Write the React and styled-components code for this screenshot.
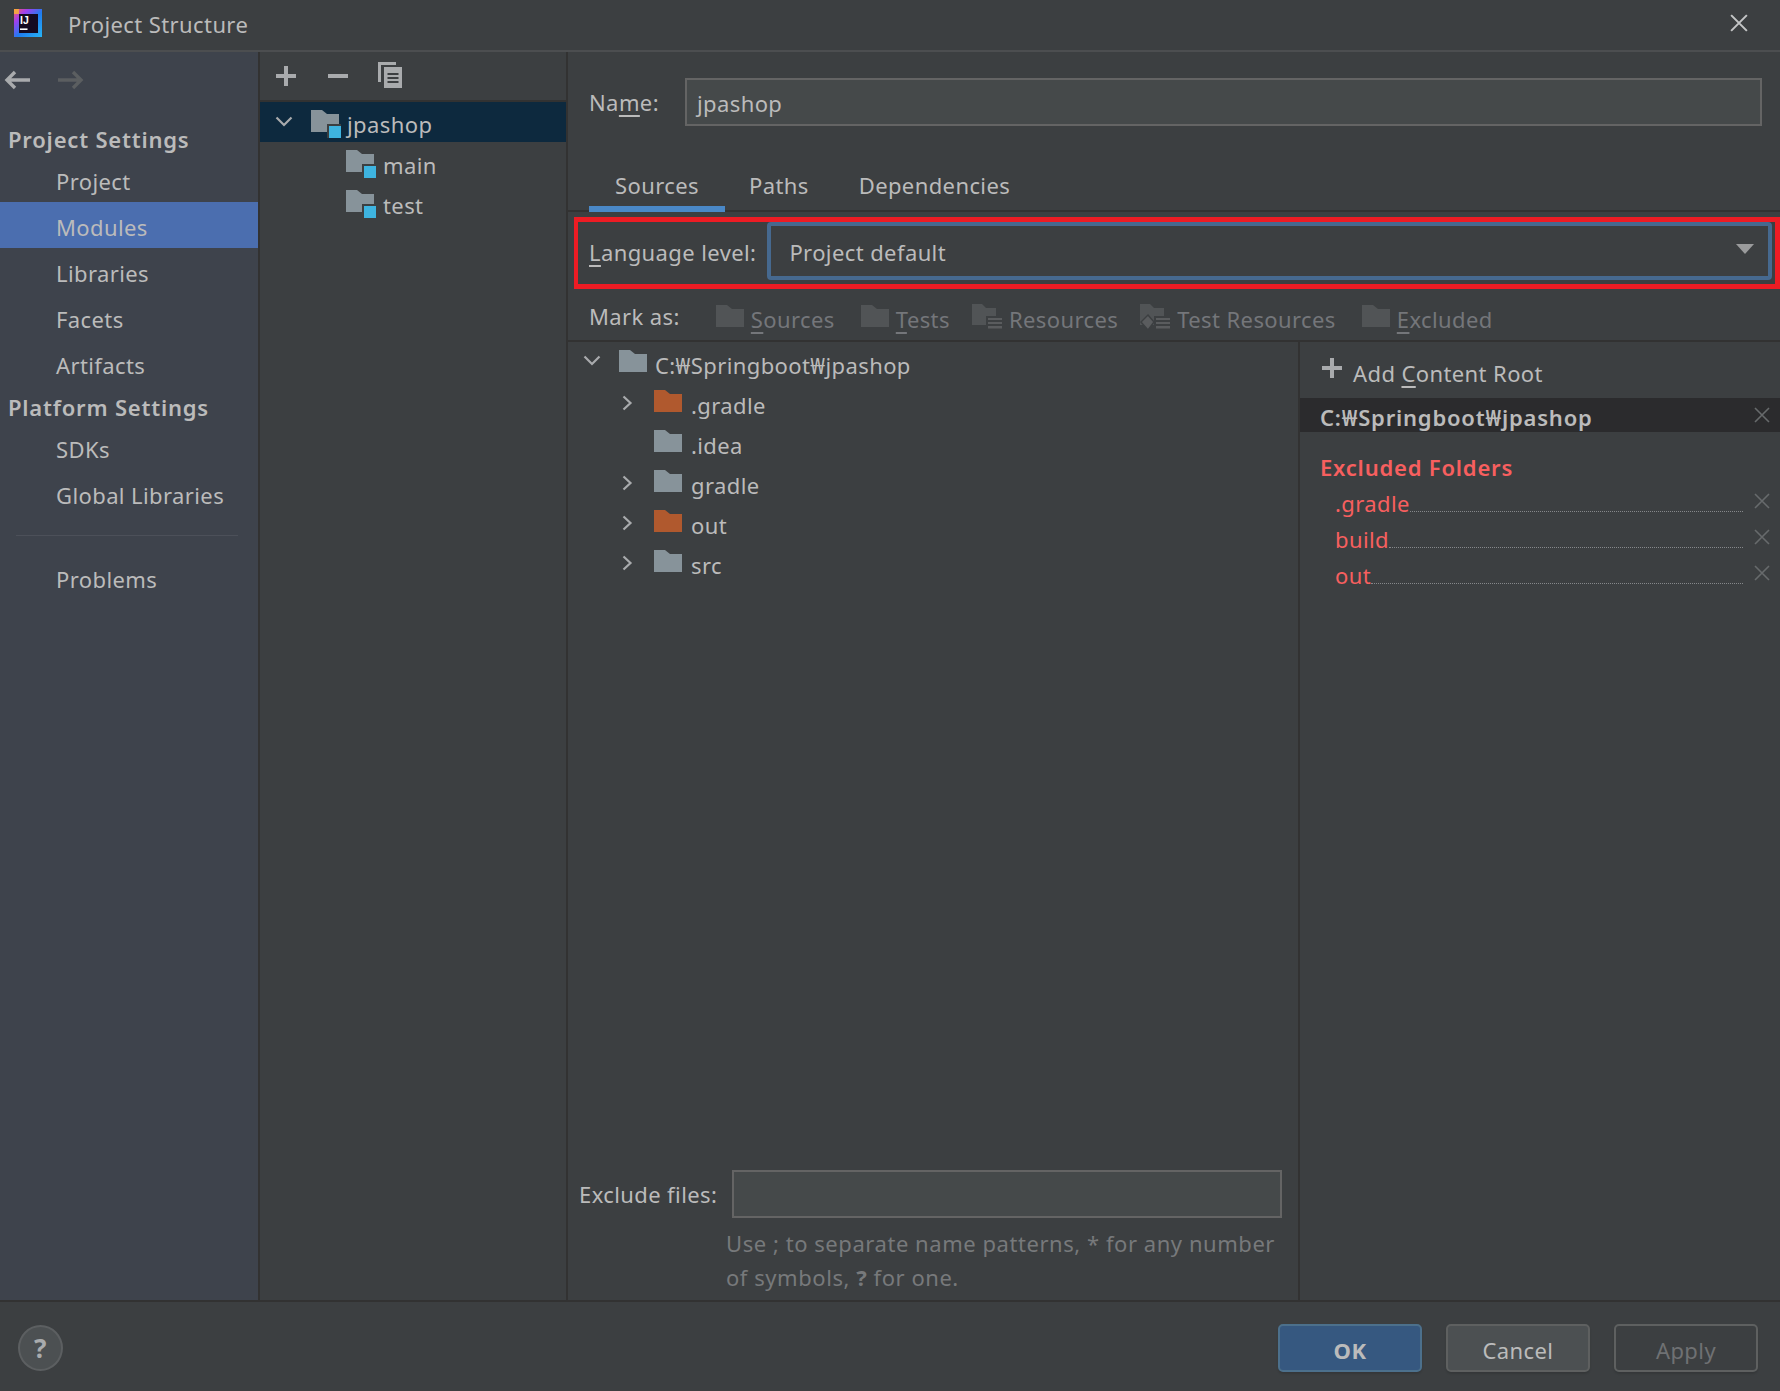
import React from 'react';
import styled, { createGlobalStyle } from 'styled-components';

const Global = createGlobalStyle`
  html, body { margin: 0; background: #3c3f41; }
  * { box-sizing: border-box; }
  svg { display: block; }
`;
const FONT = `"Noto Sans", "Noto Sans CJK KR", sans-serif`;

const Window = styled.div`
  width: 1780px; height: 1391px; display: flex; flex-direction: column; overflow: hidden;
  background: #3c3f41; color: #bbbbbb; font: 400 22px/30px ${FONT}; letter-spacing: .4px;
`;
const TitleBar = styled.header`
  height: 52px; flex: none; display: flex; align-items: center; padding: 0 32px 4px 14px;
  border-bottom: 2px solid #4c4e50;
`;
const Title = styled.h1`
  margin: 2px 0 0 26px; font: inherit; flex: 1;
`;
const Main = styled.div`flex: 1; display: flex; min-height: 0;`;

const Sidebar = styled.nav`
  width: 260px; flex: none; background: #3e434c; border-right: 2px solid #323232;
  display: flex; flex-direction: column;
`;
const NavArrows = styled.div`
  height: 66px; flex: none; display: flex; align-items: flex-start; gap: 28px; padding: 18px 0 0 4px;
`;
const SectionHead = styled.div`
  height: ${p => p.$h}px; flex: none; padding-left: 8px; font-weight: 600; letter-spacing: .8px;
  display: flex; align-items: flex-end; padding-bottom: 2px;
`;
const NavItem = styled.div`
  height: 46px; flex: none; padding: 4px 0 0 56px; display: flex; align-items: center;
  background: ${p => (p.$active ? '#4b6eaf' : 'transparent')};
`;
const NavRule = styled.hr`
  height: 1px; border: 0; margin: 19px 20px 18px 16px; background: #4c5059; flex: none;
`;

const Middle = styled.section`
  width: 308px; flex: none; border-right: 2px solid #323232; display: flex; flex-direction: column;
`;
const MiddleBar = styled.div`
  height: 50px; flex: none; border-bottom: 2px solid #323232; display: flex; align-items: flex-start;
  padding: 14px 0 0 16px;
`;
const ModuleRow = styled.div`
  height: 40px; flex: none; display: flex; align-items: flex-start; padding-left: ${p => p.$indent}px;
  background: ${p => (p.$selected ? '#0d293e' : 'transparent')};
`;
const ModuleLabel = styled.span`margin-left: 7px; margin-top: ${p => p.$top ?? 8}px;`;

const Content = styled.section`flex: 1; min-width: 0; display: flex; flex-direction: column;`;
const NameRow = styled.div`
  flex: none; display: flex; align-items: center; gap: 26px; padding: 26px 18px 0 21px;
`;
const FieldLabel = styled.label`flex: none; white-space: nowrap;`;
const Key = styled.span`text-decoration: underline; text-decoration-thickness: 2px; text-underline-offset: 4px;`;
const TextField = styled.div`
  flex: 1; height: 48px; background: #45494a; border: 2px solid #646464; padding: 2px 10px 0;
  display: flex; align-items: center;
`;
const Tabs = styled.div`
  height: 86px; flex: none; display: flex; align-items: flex-end; padding-left: 21px;
  border-bottom: 2px solid #323232;
`;
const Tab = styled.div`
  height: 52px; padding: 10px 26px 0; display: flex; align-items: flex-start; margin-bottom: -2px;
  border-bottom: 6px solid ${p => (p.$active ? '#4a88c7' : 'transparent')};
  margin-right: -2px;
`;
const LanguageBox = styled.div`
  height: 72px; flex: none; margin: 5px 0 0 6px; border: solid #ed1c24; border-width: 5px 5px 5px 4px;
  padding: 0 3px 0 11px; display: flex; align-items: flex-start; gap: 11px;
`;
const LanguageLabel = styled(FieldLabel)`margin-top: 15px;`;
const Combo = styled.div`
  flex: 1; height: 58px; border: 4px solid #46698f; border-radius: 4px; padding: 2px 14px 0 18px;
  display: flex; align-items: center; justify-content: space-between;
`;
const ComboArrow = styled.span`
  width: 0; height: 0; border-left: 9px solid transparent; border-right: 9px solid transparent;
  border-top: 10px solid #9a9b9c; margin-top: -6px;
`;
const MarkRow = styled.div`
  height: 53px; flex: none; border-bottom: 2px solid #323232; display: flex; align-items: flex-start;
  padding: 12px 0 0 21px; white-space: nowrap;
`;
const MarkItem = styled.div`
  display: flex; align-items: flex-start; gap: 7px; color: #74767a; margin-left: ${p => p.$gap}px;
`;
const MarkText = styled.span`margin-top: 3px;`;

const Split = styled.div`flex: 1; min-height: 0; display: flex;`;
const TreeSide = styled.div`
  width: 730px; flex: none; display: flex; flex-direction: column; padding-top: 4px;
`;
const TreeRow = styled.div`
  height: 40px; flex: none; display: flex; align-items: flex-start; padding-left: ${p => p.$indent}px;
`;
const Chevron = styled.span`
  width: 18px; flex: none; display: flex; justify-content: center; margin-right: ${p => p.$gap}px;
  padding-top: ${p => p.$top}px;
`;
const TreeLabel = styled.span`margin-left: ${p => p.$left ?? 8}px; margin-top: 4px;`;
const ExcludeBlock = styled.div`margin-top: auto; padding: 0 16px 6px 11px;`;
const ExcludeRow = styled.div`display: flex; align-items: center; gap: 15px;`;
const ExcludeField = styled(TextField)`flex: 1;`;
const Hint = styled.p`
  margin: 8px 0 0 147px; font-size: 22px; line-height: 34px; color: #77797b; white-space: nowrap;
  letter-spacing: .55px;
`;
const HintKey = styled.b`font-weight: 700;`;

const RootsSide = styled.aside`
  flex: 1; min-width: 0; border-left: 2px solid #323232; display: flex; flex-direction: column;
`;
const AddRoot = styled.div`
  height: 56px; flex: none; display: flex; align-items: flex-start; padding: 16px 0 0 22px; gap: 11px;
`;
const AddText = styled.span`margin-top: 0;`;
const PathBar = styled.div`
  height: 34px; flex: none; background: #2b2b2d; display: flex; justify-content: space-between;
  padding: 0 10px 0 20px; font-weight: 600; line-height: 38px; letter-spacing: .8px;
`;
const PathClose = styled.span`padding-top: 9px;`;
const ExcludedTitle = styled.div`
  margin: 20px 0 0 20px; height: 30px; color: #f75f5f; font-weight: 600; flex: none; letter-spacing: .8px;
`;
const ExcludedList = styled.ul`margin: 6px 0 0; padding: 0 10px 0 35px; list-style: none;`;
const ExcludedItem = styled.li`
  height: 36px; display: flex; align-items: flex-start; color: #f75f5f;
`;
const Leader = styled.span`
  flex: 1; height: 24px; border-bottom: 1px dotted #85878a; margin-right: 11px;
`;
const ItemClose = styled.span`padding-top: 5px;`;
const Footer = styled.footer`
  height: 91px; flex: none; border-top: 2px solid #323232; display: flex; align-items: flex-start;
  padding: 22px 22px 0 18px;
`;
const HelpButton = styled.div`
  width: 45px; height: 46px; border-radius: 50%; background: #4c5052; border: 2px solid #5c5f61;
  display: flex; align-items: center; justify-content: center; color: #a9abad; font-weight: 700; font-size: 26px;
  margin-top: 1px;
`;
const Buttons = styled.div`margin-left: auto; display: flex; gap: 24px;`;
const Button = styled.div`
  width: 144px; height: 48px; border-radius: 5px; display: flex; align-items: center; justify-content: center;
  padding-top: 3px; box-shadow: 0 2px 2px rgba(0,0,0,.12);
  background: ${p => (p.$kind === 'ok' ? '#365880' : p.$kind === 'cancel' ? '#4c5052' : 'transparent')};
  border: 2px solid ${p => (p.$kind === 'ok' ? '#4c708c' : '#5e6060')};
  color: ${p => (p.$kind === 'apply' ? '#6f7173' : '#bbbbbb')};
  font-weight: ${p => (p.$kind === 'ok' ? 700 : 400)};
`;

const Folder = ({ color = '#87939a', top = 0 }) => (
  <svg width={28} height={22} viewBox="0 0 28 22" style={{ marginTop: top, flex: 'none' }}>
    <path d="M0 0H11L16 4H28V22H0Z" fill={color} />
  </svg>
);
const ModuleFolder = ({ top }) => (
  <svg width="30" height="28" viewBox="0 0 30 28" style={{ marginTop: top, flex: 'none' }}>
    <path d="M0 0H11L16 4H28V22H0Z" fill="#87939a" />
    <rect x="16" y="14" width="14" height="14" fill="#3c3f41" />
    <rect x="18" y="16" width="12" height="12" fill="#3eb4e0" />
  </svg>
);
const ChevDown = () => (
  <svg width="18" height="11" viewBox="0 0 18 11"><path d="M1.5 1.5 9 9l7.5-7.5" fill="none" stroke="#a9abad" strokeWidth="2.2" /></svg>
);
const ChevRight = () => (
  <svg width="11" height="16" viewBox="0 0 11 16"><path d="M1.5 1.5 8.5 8l-7 6.5" fill="none" stroke="#a9abad" strokeWidth="2.2" /></svg>
);
const Cross = ({ color = '#676a6c', size = 16, strokeWidth = 1.6 }) => (
  <svg width={size} height={size} viewBox="0 0 16 16" style={{ flex: 'none' }}>
    <path d="M1 1 15 15M15 1 1 15" stroke={color} strokeWidth={strokeWidth} />
  </svg>
);
const Arrow = ({ color, flip }) => (
  <svg width="26" height="20" viewBox="0 0 26 20" style={{ transform: flip ? 'scaleX(-1)' : 'none' }}>
    <path d="M26 10H4M11 2 3 10l8 8" fill="none" stroke={color} strokeWidth="3.4" />
  </svg>
);
const Plus = ({ size = 20, color = '#a9abad' }) => (
  <svg width={size} height={size} viewBox="0 0 20 20" style={{ flex: 'none' }}>
    <path d="M8 0h4v8h8v4h-8v8H8v-8H0V8h8z" fill={color} />
  </svg>
);
const Minus = () => (
  <svg width="20" height="20" viewBox="0 0 20 20" style={{ marginLeft: 32 }}>
    <rect y="8" width="20" height="4" fill="#a9abad" />
  </svg>
);
const CopyIcon = () => (
  <svg width="24" height="26" viewBox="0 0 24 26" style={{ marginLeft: 30, marginTop: -4 }}>
    <path d="M0 0H18V3H3V20H0Z" fill="#a9abad" />
    <path d="M6 5H24V26H6Z" fill="#a9abad" />
    <path d="M9.5 11h11v2h-11zM9.5 15h11v2h-11zM9.5 19h11v2h-11z" fill="#3c3f41" />
  </svg>
);
const Logo = () => (
  <svg width="28" height="28" viewBox="0 0 28 28" style={{ flex: 'none' }}>
    <defs>
      <linearGradient id="lg" x1="0" y1="0" x2="1" y2="1">
        <stop offset="0" stopColor="#ff5a5a" />
        <stop offset=".25" stopColor="#a03ff0" />
        <stop offset=".55" stopColor="#1f7cf0" />
        <stop offset="1" stopColor="#27b5f5" />
      </linearGradient>
    </defs>
    <rect width="28" height="28" fill="url(#lg)" />
    <rect width="5" height="5" fill="#f7b733" opacity=".8" />
    <rect x="5" y="5" width="19" height="19" fill="#140a22" />
    <text x="6" y="15" fill="#fff" fontSize="10.5" fontWeight="700" letterSpacing="0" fontFamily="Liberation Sans, sans-serif">IJ</text>
    <rect x="6" y="19.4" width="7.5" height="1.6" fill="#fff" />
  </svg>
);
const ResIcon = ({ test }) => (
  <svg width="30" height="26" viewBox="0 0 30 26" style={{ flex: 'none', marginTop: 3 }}>
    <path d="M0 0H10L14 4H24V12H14V21H0Z" fill="#515456" />
    <path d="M16 14H30V16H16ZM16 18H30V20H16ZM16 22H30V24.5H16Z" fill="#5a5c5e" />
    {test && <path d="M8 11 14 18 8 26 1 18Z" fill="#5a5c5e" stroke="#3c3f41" strokeWidth="1.4" />}
  </svg>
);
const Marked = ({ gap, icon, k, rest }) => (
  <MarkItem $gap={gap}>
    {icon}
    <MarkText>{k && <Key>{k}</Key>}{rest}</MarkText>
  </MarkItem>
);

const treeRows = [
  { name: '.gradle', color: '#b0592e', chev: true },
  { name: '.idea', chev: false },
  { name: 'gradle', chev: true },
  { name: 'out', color: '#b0592e', chev: true },
  { name: 'src', chev: true },
];
const excluded = ['.gradle', 'build', 'out'];

export default function App() {
  return (
    <Window>
      <Global />
      <TitleBar>
        <Logo />
        <Title>Project Structure</Title>
        <Cross color="#c4c5c6" size={18} strokeWidth={1.8} />
      </TitleBar>
      <Main>
        <Sidebar>
          <NavArrows>
            <Arrow color="#a9abad" />
            <Arrow color="#5b5e60" flip />
          </NavArrows>
          <SectionHead $h={38}>Project Settings</SectionHead>
          <NavItem>Project</NavItem>
          <NavItem $active>Modules</NavItem>
          <NavItem>Libraries</NavItem>
          <NavItem>Facets</NavItem>
          <NavItem>Artifacts</NavItem>
          <SectionHead $h={38}>Platform Settings</SectionHead>
          <NavItem>SDKs</NavItem>
          <NavItem>Global Libraries</NavItem>
          <NavRule />
          <NavItem>Problems</NavItem>
        </Sidebar>
        <Middle>
          <MiddleBar>
            <Plus />
            <Minus />
            <CopyIcon />
          </MiddleBar>
          <ModuleRow $selected $indent={15}>
            <Chevron $gap={18} $top={14}><ChevDown /></Chevron>
            <ModuleFolder top={8} />
            <ModuleLabel $top={7} style={{ marginLeft: 6 }}>jpashop</ModuleLabel>
          </ModuleRow>
          <ModuleRow $indent={86}>
            <ModuleFolder top={8} />
            <ModuleLabel>main</ModuleLabel>
          </ModuleRow>
          <ModuleRow $indent={86}>
            <ModuleFolder top={8} />
            <ModuleLabel>test</ModuleLabel>
          </ModuleRow>
        </Middle>
        <Content>
          <NameRow>
            <FieldLabel>Na<Key>m</Key>e:</FieldLabel>
            <TextField>jpashop</TextField>
          </NameRow>
          <Tabs>
            <Tab $active>Sources</Tab>
            <Tab>Paths</Tab>
            <Tab>Dependencies</Tab>
          </Tabs>
          <LanguageBox>
            <LanguageLabel><Key>L</Key>anguage level:</LanguageLabel>
            <Combo>Project default<ComboArrow /></Combo>
          </LanguageBox>
          <MarkRow>
            <span>Mark as:</span>
            <Marked gap={36} icon={<Folder color="#515456" top={4} />} k="S" rest="ources" />
            <Marked gap={26} icon={<Folder color="#515456" top={4} />} k="T" rest="ests" />
            <Marked gap={22} icon={<ResIcon />} rest="Resources" />
            <Marked gap={22} icon={<ResIcon test />} rest="Test Resources" />
            <Marked gap={26} icon={<Folder color="#515456" top={4} />} k="E" rest="xcluded" />
          </MarkRow>
          <Split>
            <TreeSide>
              <TreeRow $indent={15}>
                <Chevron $gap={18} $top={9}><ChevDown /></Chevron>
                <Folder top={4} />
                <TreeLabel>C:₩Springboot₩jpashop</TreeLabel>
              </TreeRow>
              {treeRows.map(r => (
                <TreeRow key={r.name} $indent={50}>
                  <Chevron $gap={18} $top={9}>{r.chev && <ChevRight />}</Chevron>
                  <Folder color={r.color} top={4} />
                  <TreeLabel $left={9}>{r.name}</TreeLabel>
                </TreeRow>
              ))}
              <ExcludeBlock>
                <ExcludeRow>
                  <FieldLabel>Exclude files:</FieldLabel>
                  <ExcludeField />
                </ExcludeRow>
                <Hint>
                  Use ; to separate name patterns, * for any number<br />
                  of symbols, <HintKey>?</HintKey> for one.
                </Hint>
              </ExcludeBlock>
            </TreeSide>
            <RootsSide>
              <AddRoot>
                <Plus />
                <AddText>Add <Key>C</Key>ontent Root</AddText>
              </AddRoot>
              <PathBar>
                <span>C:₩Springboot₩jpashop</span>
                <PathClose><Cross /></PathClose>
              </PathBar>
              <ExcludedTitle>Excluded Folders</ExcludedTitle>
              <ExcludedList>
                {excluded.map(name => (
                  <ExcludedItem key={name}>
                    <span>{name}</span>
                    <Leader />
                    <ItemClose><Cross /></ItemClose>
                  </ExcludedItem>
                ))}
              </ExcludedList>
            </RootsSide>
          </Split>
        </Content>
      </Main>
      <Footer>
        <HelpButton>?</HelpButton>
        <Buttons>
          <Button $kind="ok">OK</Button>
          <Button $kind="cancel">Cancel</Button>
          <Button $kind="apply">Apply</Button>
        </Buttons>
      </Footer>
    </Window>
  );
}
